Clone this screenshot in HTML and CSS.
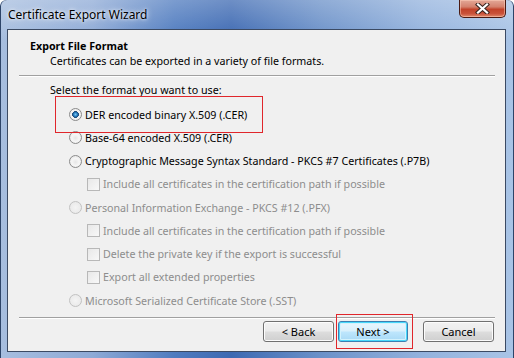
FILE: index.html
```html
<!DOCTYPE html>
<html lang="en">
<head>
    <meta charset="UTF-8">
    <title>Certificate Export Wizard</title>
    <link rel="stylesheet" href="styles.css">
</head>
<body>

<div class="window">
    <div class="titlebar">
        <span class="title">Certificate Export Wizard</span>
        <span class="close">
            <svg width="17" height="11" viewBox="0 0 17 11">
                <path d="M4 1.5 L13 9.5 M13 1.5 L4 9.5" stroke="#3a2520" stroke-width="4.2" stroke-linecap="square"/>
                <path d="M4 1.5 L13 9.5 M13 1.5 L4 9.5" stroke="#ffffff" stroke-width="2.2" stroke-linecap="square"/>
            </svg>
        </span>
    </div>

    <div class="client">
        <div class="header">
            <div class="header-title">Export File Format</div>
            <div class="header-sub">Certificates can be exported in a variety of file formats.</div>
        </div>
        <div class="rule"></div>

        <div class="body">
            <div class="prompt">Select the format you want to use:</div>

            <div class="option"><span class="marked"><span class="radio checked"></span>DER encoded binary X.509 (.CER)</span></div>
            <div class="option"><span class="radio"></span>Base-64 encoded X.509 (.CER)</div>
            <div class="option"><span class="radio"></span>Cryptographic Message Syntax Standard - PKCS #7 Certificates (.P7B)</div>
            <div class="option sub disabled"><span class="check"></span>Include all certificates in the certification path if possible</div>
            <div class="option disabled"><span class="radio"></span>Personal Information Exchange - PKCS #12 (.PFX)</div>
            <div class="option sub disabled"><span class="check"></span>Include all certificates in the certification path if possible</div>
            <div class="option sub disabled"><span class="check"></span>Delete the private key if the export is successful</div>
            <div class="option sub disabled"><span class="check"></span>Export all extended properties</div>
            <div class="option disabled"><span class="radio"></span>Microsoft Serialized Certificate Store (.SST)</div>
        </div>

        <div class="rule"></div>
        <div class="footer">
            <button class="btn">&lt; Back</button>
            <span class="marked-btn"><button class="btn default">Next &gt;</button></span>
            <button class="btn cancel">Cancel</button>
        </div>
    </div>
</div>

</body>
</html>
```

FILE: styles.css
```css
/* General Styling */
body {
    margin: 0;
    padding: 0;
    background-color: #ffffff;
    font-family: 'Noto Sans', 'Open Sans', sans-serif;
    font-size: 10.7px;
    color: #000;
}

/* Window frame */
.window {
    width: 514px;
    height: 358px;
    box-sizing: border-box;
    padding: 0 8px 6px 7px;
    display: flex;
    flex-direction: column;
    border-radius: 6px 6px 0 0;
    background:
        linear-gradient(180deg, rgba(255, 255, 255, 0.25) 0%, rgba(255, 255, 255, 0) 40px),
        linear-gradient(90deg, #a7bedf 0%, #8eaad6 18%, #4f7bbf 34%, #3d69b2 45%, #6a90c8 62%, #93b2dd 82%, #a9c4e6 100%);
    box-shadow: inset 1px 0 0 #2d4468, inset -1px 0 0 #2d4468;
}

.titlebar {
    height: 29px;
    display: flex;
    justify-content: space-between;
    align-items: flex-start;
    flex-shrink: 0;
}

.title {
    font-size: 12px;
    padding: 6px 0 0 1px;
    color: #000;
    text-shadow: 0 0 6px rgba(255, 255, 255, 0.9), 0 0 3px rgba(255, 255, 255, 0.9);
}

.close {
    width: 47px;
    height: 18px;
    box-sizing: border-box;
    display: flex;
    align-items: center;
    justify-content: center;
    border: 1px solid #4a1a12;
    border-top: none;
    border-radius: 0 0 5px 5px;
    background: linear-gradient(180deg, #e3a897 0%, #d4826e 40%, #c2432a 55%, #c9523a 80%, #e08a6d 100%);
    box-shadow: inset 0 0 0 1px rgba(255, 210, 190, 0.5);
}

/* Client area */
.client {
    flex: 1;
    display: flex;
    flex-direction: column;
    background-color: #f0f0f0;
    border: 1px solid #3b4a63;
}

.header {
    padding: 9px 0 0 22px;
    line-height: 15px;
}

.header-title {
    font-weight: bold;
}

.header-sub {
    padding-left: 20px;
}

.rule {
    margin: 0 10px 0 11px;
    height: 0;
    border-top: 1px solid #a0a0a0;
    border-bottom: 1px solid #ffffff;
}

.header + .rule {
    margin-top: 6px;
}

.body {
    flex: 1;
    padding-top: 6px;
}

.prompt {
    padding-left: 42px;
    line-height: 15px;
    margin-bottom: 5px;
}

.option {
    height: 23.25px;
    display: flex;
    align-items: center;
    padding-left: 61px;
    white-space: nowrap;
}

.option.sub {
    padding-left: 79px;
}

.option.disabled {
    color: #8d8d8d;
}

/* red marker drawn over the chosen option */
.marked {
    position: relative;
    display: flex;
    align-items: center;
}

.marked::after {
    content: "";
    position: absolute;
    left: -14px;
    right: -16px;
    top: -12px;
    bottom: -11px;
    border: 1px solid #e0262b;
}

.radio {
    width: 13px;
    height: 13px;
    box-sizing: border-box;
    border-radius: 50%;
    margin-right: 3px;
    border: 1px solid #8b8b8b;
    background: radial-gradient(circle at 50% 55%, #e6e6e6 0%, #f6f6f6 45%, #dcdcdc 100%);
    flex-shrink: 0;
}

.radio.checked {
    background:
        radial-gradient(circle at 50% 50%, #7cc8f2 0%, #2b84c6 22%, #134a82 38%, #3c5a78 42%, transparent 46%),
        radial-gradient(circle, #dcdcdc 0%, #f4f4f4 60%, #d8d8d8 100%);
}

.disabled .radio {
    border-color: #c2c2c2;
    background: radial-gradient(circle, #f4f4f4 0%, #ececec 60%, #e2e2e2 100%);
}

.check {
    width: 13px;
    height: 13px;
    box-sizing: border-box;
    margin-right: 3px;
    border: 1px solid #b8b8b8;
    background: linear-gradient(135deg, #e8e8e8 0%, #f8f8f8 100%);
    flex-shrink: 0;
}

/* Footer buttons */
.footer {
    display: flex;
    justify-content: flex-end;
    align-items: center;
    padding: 2px 11px 9px 0;
}

.btn {
    width: 71px;
    height: 21px;
    padding: 0;
    font-family: 'Noto Sans', 'Open Sans', sans-serif;
    font-size: 11px;
    color: #000;
    border: 1px solid #707070;
    border-radius: 3px;
    background: linear-gradient(180deg, #f2f2f2 0%, #ebebeb 48%, #dddddd 52%, #cfcfcf 100%);
    box-shadow: inset 0 0 0 1px #fcfcfc;
}

.btn.default {
    width: 70px;
    border-color: #3c7fb1;
    background: linear-gradient(180deg, #eaf6fd 0%, #d9f0fc 48%, #bee6fd 52%, #a7d9f5 100%);
    box-shadow: inset 0 0 0 1px #48d8fb, inset 0 0 0 2px #d4f2fd;
}

.marked-btn {
    position: relative;
    display: flex;
    margin-left: 4px;
}

.marked-btn::after {
    content: "";
    position: absolute;
    left: -2px;
    right: -5px;
    top: -7px;
    bottom: -7px;
    border: 1px solid #e0262b;
}

.btn.cancel {
    margin-left: 15px;
}
```
